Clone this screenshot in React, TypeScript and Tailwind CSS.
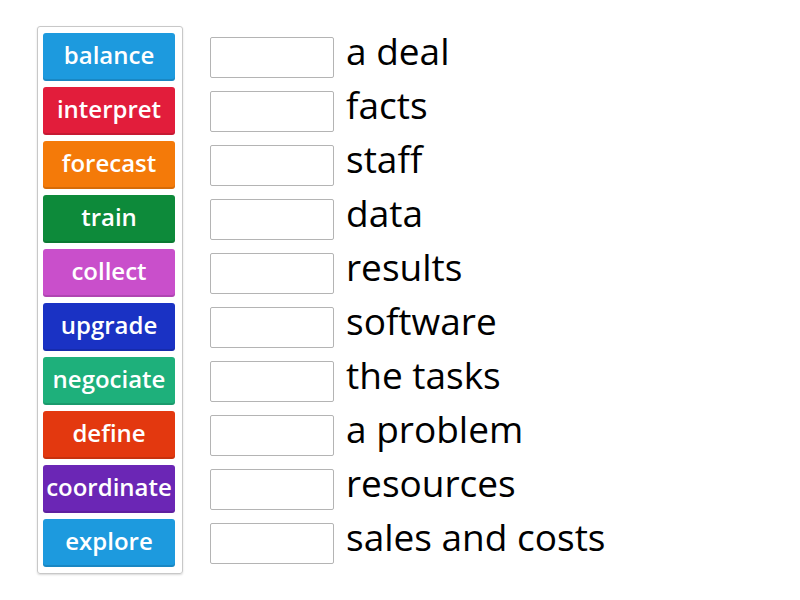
import React from 'react';

const tiles: { word: string; bg: string }[] = [
  { word: 'balance', bg: 'bg-[#1d9ade]' },
  { word: 'interpret', bg: 'bg-[#e21d3b]' },
  { word: 'forecast', bg: 'bg-[#f47a09]' },
  { word: 'train', bg: 'bg-[#0d8a3a]' },
  { word: 'collect', bg: 'bg-[#c94fcb]' },
  { word: 'upgrade', bg: 'bg-[#1a32c4]' },
  { word: 'negociate', bg: 'bg-[#1eb07b]' },
  { word: 'define', bg: 'bg-[#e3380f]' },
  { word: 'coordinate', bg: 'bg-[#6b26b5]' },
  { word: 'explore', bg: 'bg-[#1d9ade]' },
];

const phrases = [
  'a deal',
  'facts',
  'staff',
  'data',
  'results',
  'software',
  'the tasks',
  'a problem',
  'resources',
  'sales and costs',
];

const App: React.FC = () => {
  return (
    <div className="w-[800px] h-[600px] bg-white font-['Open_Sans',sans-serif] flex items-start pt-[26px] pl-[37px]">
      {/* word tiles */}
      <div className="w-[146px] border border-[#c8c8c8] rounded-[3px] pt-[6px] pb-[6px] pl-[5px] pr-[7px] flex flex-col gap-[6px] shadow-[0_1px_2px_rgba(0,0,0,0.15)]">
        {tiles.map((t) => (
          <div
            key={t.word}
            className={`${t.bg} h-[48px] rounded-[3px] flex items-center justify-center text-white font-semibold text-[24px] leading-none pb-[5px] shadow-[inset_0_-2px_0_rgba(0,0,0,0.12)]`}
          >
            {t.word}
          </div>
        ))}
      </div>

      {/* answer rows */}
      <div className="ml-[27px] pt-[4px] flex flex-col">
        {phrases.map((p) => (
          <div key={p} className="h-[54px] flex items-center">
            <div className="w-[124px] h-[41px] border border-[#b4b4b4] rounded-[2px] bg-white" />
            <span className="ml-[12px] text-[37px] leading-none text-black mb-[14px]">{p}</span>
          </div>
        ))}
      </div>
    </div>
  );
};

export default App;
